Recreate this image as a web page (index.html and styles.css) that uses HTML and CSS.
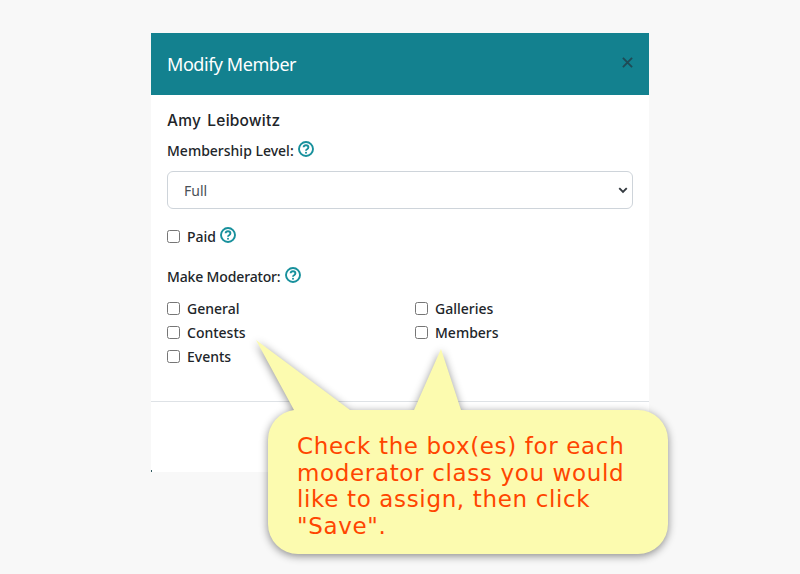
FILE: index.html
```html
<!DOCTYPE html>
<html lang="en">
<head>
<meta charset="utf-8">
<title>Modify Member</title>
<link rel="stylesheet" href="styles.css">
</head>
<body>
<main class="modal">
  <header class="modal-header">
    <h1 class="modal-title">Modify Member</h1>
    <svg class="close" viewBox="0 0 12 12" aria-label="Close"><path d="M1 1l10 10M11 1L1 11"/></svg>
  </header>
  <section class="modal-body">
    <h2 class="member-name">Amy Leibowitz</h2>
    <div class="label-row">
      <span>Membership Level:</span>
      <svg class="help" viewBox="0 0 16 16"><circle cx="8" cy="8" r="7"/><path d="M5.6 6.3C5.7 4.9 6.7 4.2 8 4.2c1.4 0 2.4.8 2.4 2 0 1-.6 1.5-1.3 2-.7.4-1.1.8-1.1 1.5"/><circle class="dot" cx="8" cy="11.8" r="1"/></svg>
    </div>
    <div class="select"><span>Full</span>
      <svg class="chevron" viewBox="0 0 16 16"><path d="M2 5l6 6 6-6"/></svg>
    </div>
    <label class="check paid"><span class="box"></span><span>Paid</span>
      <svg class="help" viewBox="0 0 16 16"><circle cx="8" cy="8" r="7"/><path d="M5.6 6.3C5.7 4.9 6.7 4.2 8 4.2c1.4 0 2.4.8 2.4 2 0 1-.6 1.5-1.3 2-.7.4-1.1.8-1.1 1.5"/><circle class="dot" cx="8" cy="11.8" r="1"/></svg>
    </label>
    <div class="label-row moderator">
      <span>Make Moderator:</span>
      <svg class="help" viewBox="0 0 16 16"><circle cx="8" cy="8" r="7"/><path d="M5.6 6.3C5.7 4.9 6.7 4.2 8 4.2c1.4 0 2.4.8 2.4 2 0 1-.6 1.5-1.3 2-.7.4-1.1.8-1.1 1.5"/><circle class="dot" cx="8" cy="11.8" r="1"/></svg>
    </div>
    <div class="grid">
      <label class="check"><span class="box"></span><span>General</span></label>
      <label class="check"><span class="box"></span><span>Galleries</span></label>
      <label class="check"><span class="box"></span><span>Contests</span></label>
      <label class="check"><span class="box"></span><span>Members</span></label>
      <label class="check"><span class="box"></span><span>Events</span></label>
    </div>
  </section>
  <footer class="modal-footer"></footer>
</main>
<aside class="callout">
  <svg class="callout-shape" viewBox="0 0 440 224" width="440" height="224">
    <path d="M8 0L102 70H166L193 9L213 70H390A30 30 0 0 1 420 100V184A30 30 0 0 1 390 214H50A30 30 0 0 1 20 184V100A30 30 0 0 1 46 70Z"/>
  </svg>
  <p class="callout-text">Check the box(es) for each moderator class you would like to assign, then click "Save".</p>
</aside>
</body>
</html>
```
FILE: styles.css
```css
* { box-sizing: border-box; }
html, body { height: 100%; }
body {
  margin: 0;
  background: #f8f8f8;
  font-family: "Noto Sans", sans-serif;
  color: #212529;
  position: relative;
  overflow: hidden;
  padding: 33px 151px 0;
}
.modal { width: 498px; height: 439px; background: #fff; display: flex; flex-direction: column; position: relative; }
.modal::after { content: ""; position: absolute; left: 0; bottom: 0; width: 1px; height: 2px; background: #2f5a60; }
.modal-header {
  height: 62px;
  flex: none;
  background: #13818f;
  display: flex;
  align-items: center;
  justify-content: space-between;
  padding: 0 16px;
}
.modal-title { margin: 0; font-size: 18px; font-weight: 400; color: #fff; line-height: 1; letter-spacing: -.45px; }
.close { width: 11px; height: 11px; margin-bottom: 4px; fill: none; stroke: #1f4a55; stroke-width: 2; }
.modal-body { padding: 16px 16px 0; height: 306px; flex: none; }
.member-name { margin: 0; font-family: "Inter", sans-serif; font-size: 15.5px; font-weight: 500; line-height: 20px; word-spacing: 2px; letter-spacing: .2px; }
.label-row { display: flex; align-items: center; gap: 4px; margin-top: 10px; font-size: 14px; font-weight: 500; line-height: 20px; }
.help { width: 16px; height: 16px; fill: none; stroke: #17909c; stroke-width: 1.9; margin-top: -5px; flex: none; }
.help .dot { fill: #17909c; stroke: none; }
.select {
  margin-top: 10px;
  height: 38px;
  border: 1px solid #ced4da;
  border-radius: 6px;
  padding: 0 4px 0 16px;
  display: flex;
  align-items: center;
  justify-content: space-between;
  font-size: 14px;
  color: #495057;
}
.chevron { width: 10px; height: 10px; fill: none; stroke: #343a40; stroke-width: 3; }
.check { display: flex; align-items: center; font-size: 14px; font-weight: 500; line-height: 24px; height: 24px; }
.box { width: 13px; height: 13px; border: 1px solid #767676; border-radius: 2.5px; background: #fff; margin: -2px 7px 0 0; flex: none; }
.paid { margin-top: 16px; }
.paid .help { margin-left: 4px; }
.moderator { margin-top: 18px; letter-spacing: -.15px; }
.grid { display: grid; grid-template-columns: 248px 1fr; margin-top: 10px; }
.modal-footer { border-top: 1px solid #dee2e6; flex: 1; }
.callout { position: absolute; left: 248px; top: 340px; width: 440px; height: 224px; }
.callout-shape { display: block; fill: #fcfbaf; filter: drop-shadow(0 2px 4px rgba(0,0,0,.45)); }
.callout-text {
  position: absolute;
  left: 49px;
  top: 93px;
  width: 345px;
  margin: 0;
  font-family: "DejaVu Sans", sans-serif;
  font-size: 23px;
  line-height: 26.5px;
  letter-spacing: .65px;
  color: #ff4500;
}
```
